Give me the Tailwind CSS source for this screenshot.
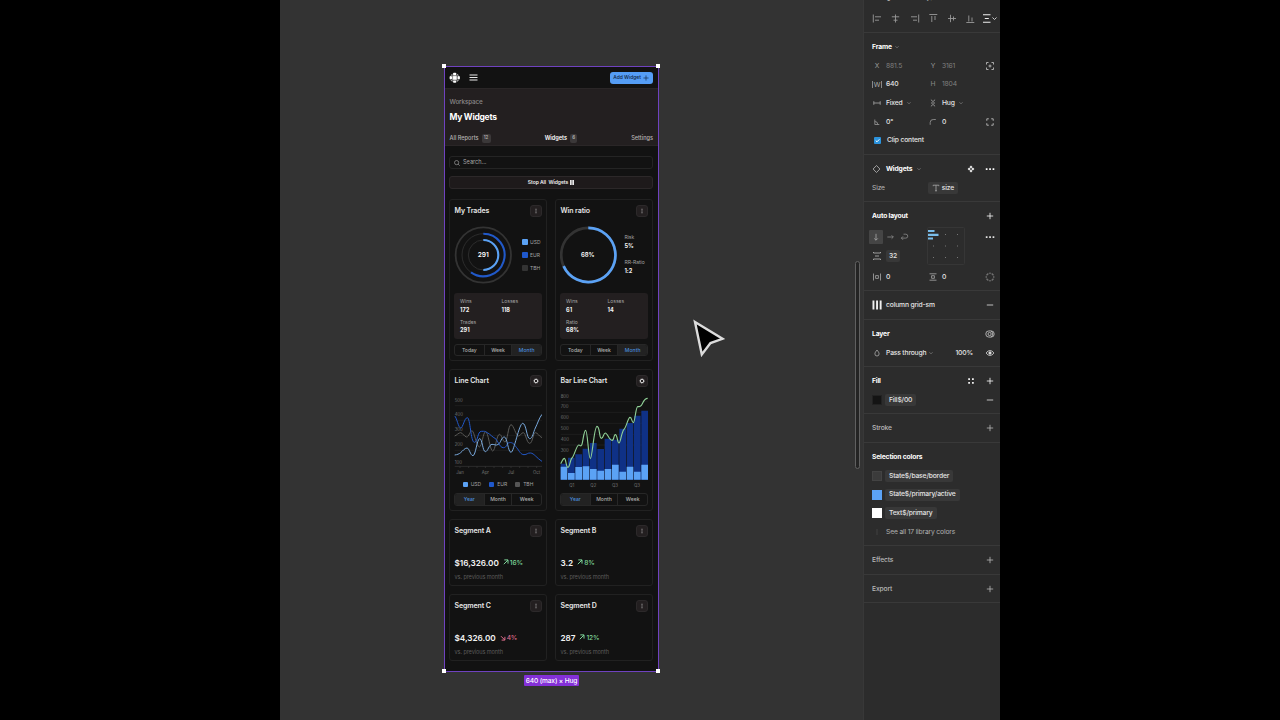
<!DOCTYPE html>
<html lang="en">
  <head>
    <meta charset="UTF-8" />
    <meta name="viewport" content="width=device-width, initial-scale=1.0" />
    <title>Widgets</title>
    <script src="https://cdn.jsdelivr.net/npm/@tailwindcss/browser@4"></script>
  </head>
  <body class="bg-black h-screen overflow-hidden flex justify-center font-['Inter',sans-serif] leading-none">
    <!-- Icons -->
    <svg class="hidden">
      <symbol id="plus" viewBox="0 0 10 10"><path d="M5 1.8v6.4M1.8 5h6.4" stroke="currentColor" stroke-width=".8" fill="none" /></symbol>
      <symbol id="minus" viewBox="0 0 10 10"><path d="M1.8 5h6.4" stroke="currentColor" stroke-width=".8" fill="none" /></symbol>
      <symbol id="chevron" viewBox="0 0 6 6"><path d="M1.5 2.3 3 3.8l1.5-1.5" stroke="currentColor" stroke-width=".7" fill="none" /></symbol>
      <symbol id="dots" viewBox="0 0 10 10"><path d="M.8 4.2h1.7v1.7H.8zM4.2 4.2h1.7v1.7H4.2zM7.6 4.2h1.7v1.7H7.6z" fill="currentColor" /></symbol>
      <symbol id="kebab" viewBox="0 0 12 12"><path d="M5.5 3.3h1v1.1h-1zM5.5 5.4h1v1.1h-1zM5.5 7.5h1v1.1h-1z" fill="currentColor" /></symbol>
      <symbol id="gear" viewBox="0 0 12 12"><circle cx="6" cy="6" r="2.1" stroke="currentColor" stroke-width="1.2" fill="none" /><circle cx="6" cy="6" r="2.9" stroke="currentColor" stroke-width=".5" stroke-dasharray="1.14 1.14" fill="none" /></symbol>
      <symbol id="up" viewBox="0 0 6 6"><path d="M.8 5.2 5 1M1.3.9H5v3.7" stroke="currentColor" stroke-width="1" fill="none" /></symbol>
      <symbol id="down" viewBox="0 0 6 6"><path d="M1 1.2l3.8 3.8M4.9 1.8v3.3H1.6" stroke="currentColor" stroke-width="1" fill="none" /></symbol>
    </svg>

    <div class="relative w-[720px] h-full bg-[#333333] flex justify-end overflow-hidden">
      <!-- Selected frame -->
      <div class="absolute left-[164px] top-[66px] w-[215px] h-[606px] border border-[#6f42c0] bg-[#121212] text-[#e6e6e6] flex flex-col">
        <header class="h-[21px] shrink-0 flex items-center pl-1 pr-[5px]">
          <svg class="w-[12px] h-[12px]" viewBox="0 0 12 12" fill="#fff">
            <rect x="4" y=".8" width="3.4" height="2.4" rx="1" /><rect x="4" y="8.4" width="3.4" height="2.4" rx="1" />
            <rect x=".6" y="4.1" width="2.4" height="3.4" rx="1" /><rect x="8.5" y="4.1" width="2.4" height="3.4" rx="1" />
            <rect x="3.2" y="3.3" width="5.1" height="5.1" />
            <path d="M3.6 1.8v1.9H1.5a4.5 4.5 0 0 1 2.1-1.9zM7.9 1.8v1.9H10a4.5 4.5 0 0 0-2.1-1.9zM3.6 9.9V8H1.5a4.5 4.5 0 0 0 2.1 1.9zM7.9 9.9V8H10a4.5 4.5 0 0 1-2.1 1.9z" fill="#c4c4c4" />
            <path d="M3.6 1.5v8.7M7.9 1.5v8.7M1.4 3.7h8.7M1.4 8h8.7" stroke="#333" stroke-width=".4" />
          </svg>
          <svg class="w-[9px] h-[9px] ml-[8px]" viewBox="0 0 9 9"><path d="M.5 2h8M.5 4.5h8M.5 7h8" stroke="#e8e8e8" stroke-width="1" /></svg>
          <div class="ml-auto w-[43px] h-[12px] rounded-[3px] bg-[#559df5] text-[#10233f] text-[5px] tracking-[-0.05px] font-medium flex items-center justify-center gap-[1px] whitespace-nowrap">
            Add Widget <svg class="w-[8px] h-[8px]"><use href="#plus" /></svg>
          </div>
        </header>

        <section class="h-[58px] shrink-0 bg-[#231f20] border-y border-[#2a2627] pl-[4.5px] pr-[5px]">
          <p class="mt-[8px] h-[10px] flex items-center text-[6.3px] tracking-[-0.1px] text-[#8c898a] font-medium">Workspace</p>
          <h1 class="mt-[3px] h-[14px] flex items-center text-[8.5px] tracking-[-0.27px] font-bold text-white">My Widgets</h1>
          <nav class="mt-[8px] h-[12px] pt-[1px] flex items-center justify-between text-[5.6px] text-[#b5b3b3] font-medium">
            <div class="flex items-center gap-[3px]">All Reports <span class="w-[9px] h-[9px] mb-[1px] rounded-[2px] bg-[#3b3839] flex items-center justify-center text-[4.5px] pt-[1px]">12</span></div>
            <div class="flex items-center gap-[3px] text-white font-semibold">Widgets <span class="w-[7px] h-[9px] mb-[1px] rounded-[2px] bg-[#3b3839] text-[#b5b3b3] flex items-center justify-center text-[4.5px] pt-[1px]">6</span></div>
            <div class="py-[2px]">Settings</div>
          </nav>
        </section>

        <main class="pt-[10px] pl-1 pr-[5px] flex flex-col">
          <div class="h-[13px] border border-[#242424] rounded-[3px] flex items-center pl-[4px] gap-[3px] text-[5.6px] text-[#a5a5a5]">
            <svg class="w-[6px] h-[6px]" viewBox="0 0 6 6" fill="none" stroke="#b0b0b0" stroke-width=".6"><circle cx="2.6" cy="2.6" r="2.1" /><path d="m4.1 4.1 1.6 1.6" /></svg>
            Search...
          </div>
          <div class="mt-[7px] h-[13px] border border-[#2c2829] bg-[#1e1a1b] rounded-[3px] flex items-center justify-center gap-[2px] text-[5px] tracking-[-0.05px] font-semibold whitespace-pre text-[#f0f0f0]">Stop All  Widgets<svg class="w-[4px] h-[5px]" viewBox="0 0 4 5" fill="#e8e8e8"><path d="M0 0h1.7v5H0zM2.3 0H4v5H2.3z" /></svg></div>

          <div id="cards" class="mt-[10px] grid grid-cols-2 gap-x-[8px] gap-y-[8px]">
            <!-- My Trades -->
            <article class="h-[162px] border border-[#212121] rounded-[3px] px-[4px] pt-[5px]">
              <div class="h-[12px] flex items-center justify-between">
                <h2 class="text-[7px] tracking-[-0.1px] font-semibold pb-[1px] pl-[.5px]">My Trades</h2>
                <svg class="w-[12px] h-[12px] rounded-[3px] bg-[#231f20] border border-[#2c292a] text-[#ccc]" viewBox="0 0 12 12"><use href="#kebab" /></svg>
              </div>
              <div class="mt-[8px] h-[60px] flex items-center">
                <svg class="w-[59px] h-[59px]" viewBox="0 0 59 59" fill="none">
                  <circle cx="29.3" cy="29" r="27.7" stroke="#333" stroke-width="1.8" />
                  <circle cx="29.3" cy="29" r="21.3" stroke="#2c2c2c" stroke-width="1" />
                  <circle cx="29.3" cy="29" r="15" stroke="#2c2c2c" stroke-width="1" />
                  <path d="M29.3 7.7a21.3 21.3 0 1 1-12.3 38.7" stroke="#2159c9" stroke-width="2.1" />
                  <path d="M29.3 14a15 15 0 0 1 0 30" stroke="#5ba2f5" stroke-width="2.1" />
                  <text x="29.3" y="31.2" text-anchor="middle" font-size="6.6" font-weight="600" fill="#fff">291</text>
                </svg>
                <ul class="ml-[9px] flex flex-col gap-[7px] text-[5px] text-[#a3a3a3]">
                  <li class="h-[6px] flex items-center gap-[2px]"><i class="size-[6px] rounded-[1px] bg-[#5ba2f5]"></i>USD</li>
                  <li class="h-[6px] flex items-center gap-[2px]"><i class="size-[6px] rounded-[1px] bg-[#1f58cc]"></i>EUR</li>
                  <li class="h-[6px] flex items-center gap-[2px]"><i class="size-[6px] rounded-[1px] bg-[#333]"></i>TBH</li>
                </ul>
              </div>
              <dl class="mt-[8px] h-[46px] rounded-[3px] bg-[#231f20] pl-[6px] pt-[4px] grid grid-cols-2 grid-rows-[20.5px_20.5px] gap-x-[1px] text-[5px] text-[#a3a3a3]">
                <div><dt class="h-[9px] flex items-center">Wins</dt><dd class="h-[9px] flex items-center text-[5.6px] font-bold text-[#f2f2f2]">172</dd></div>
                <div><dt class="h-[9px] flex items-center">Losses</dt><dd class="h-[9px] flex items-center text-[5.6px] font-bold text-[#f2f2f2]">118</dd></div>
                <div><dt class="h-[9px] flex items-center">Trades</dt><dd class="h-[9px] flex items-center text-[5.6px] font-bold text-[#f2f2f2]">291</dd></div>
              </dl>
              <div class="mt-[5px] h-[12px] border border-[#272727] rounded-[3px] grid grid-cols-3 text-center text-[5.1px] leading-[10px] text-[#b0b0b0] font-medium overflow-hidden">
                <span>Today</span><span class="border-x border-[#272727]">Week</span><span class="bg-[#222] text-[#4a8ddb]">Month</span>
              </div>
            </article>

            <!-- Win ratio -->
            <article class="h-[162px] border border-[#212121] rounded-[3px] px-[4px] pt-[5px]">
              <div class="h-[12px] flex items-center justify-between">
                <h2 class="text-[7px] tracking-[-0.1px] font-semibold pb-[1px] pl-[.5px]">Win ratio</h2>
                <svg class="w-[12px] h-[12px] rounded-[3px] bg-[#231f20] border border-[#2c292a] text-[#ccc]" viewBox="0 0 12 12"><use href="#kebab" /></svg>
              </div>
              <div class="mt-[8px] h-[60px] flex items-center">
                <svg class="w-[59px] h-[59px]" viewBox="0 0 59 59" fill="none">
                  <circle cx="28.3" cy="29" r="27.1" stroke="#333" stroke-width="2.7" />
                  <path d="M28.3 1.9a27.1 27.1 0 1 1-24.7 38.2" stroke="#5ba2f5" stroke-width="2.7" />
                  <text x="27.8" y="31.2" text-anchor="middle" font-size="6" font-weight="600" fill="#fff">68%</text>
                </svg>
                <dl class="ml-[5.5px] pb-[1px] text-[5px] tracking-[-0.05px] text-[#a3a3a3] whitespace-nowrap">
                  <dt class="h-[9px] flex items-center">Risk</dt>
                  <dd class="h-[9px] flex items-center text-[5.6px] font-bold text-[#f2f2f2]">5%</dd>
                  <dt class="mt-[7px] h-[9px] flex items-center">RR-Ratio</dt>
                  <dd class="h-[9px] flex items-center text-[5.6px] font-bold text-[#f2f2f2]">1:2</dd>
                </dl>
              </div>
              <dl class="mt-[8px] h-[46px] rounded-[3px] bg-[#231f20] pl-[6px] pt-[4px] grid grid-cols-2 grid-rows-[20.5px_20.5px] gap-x-[1px] text-[5px] text-[#a3a3a3]">
                <div><dt class="h-[9px] flex items-center">Wins</dt><dd class="h-[9px] flex items-center text-[5.6px] font-bold text-[#f2f2f2]">61</dd></div>
                <div><dt class="h-[9px] flex items-center">Losses</dt><dd class="h-[9px] flex items-center text-[5.6px] font-bold text-[#f2f2f2]">14</dd></div>
                <div><dt class="h-[9px] flex items-center">Ratio</dt><dd class="h-[9px] flex items-center text-[5.6px] font-bold text-[#f2f2f2]">68%</dd></div>
              </dl>
              <div class="mt-[5px] h-[12px] border border-[#272727] rounded-[3px] grid grid-cols-3 text-center text-[5.1px] leading-[10px] text-[#b0b0b0] font-medium overflow-hidden">
                <span>Today</span><span class="border-x border-[#272727]">Week</span><span class="bg-[#222] text-[#4a8ddb]">Month</span>
              </div>
            </article>

            <!-- Line chart -->
            <article class="h-[142px] border border-[#212121] rounded-[3px] px-[4px] pt-[5px]">
              <div class="h-[12px] flex items-center justify-between">
                <h2 class="text-[7px] tracking-[-0.05px] font-semibold pb-[1px] pl-[.5px]">Line Chart</h2>
                <svg class="w-[12px] h-[12px] rounded-[3px] bg-[#231f20] border border-[#2c292a] text-[#ddd]" viewBox="0 0 12 12"><use href="#gear" /></svg>
              </div>
              <svg class="mt-[9px] w-[88px] h-[80px]" viewBox="42 90 264 240" fill="none">
                <path d="M44 119h262M44 163h262M44 208h262M44 253h262" stroke="#1e1e1e" stroke-width="3" />
                <path d="M44 301h262M60 301v5M86 301v5M111 301v5M136 301v5M162 301v5M188 301v5M213 301v5M239 301v5M264 301v5M290 301v5" stroke="#393939" stroke-width="2" />
                <g font-size="13" fill="#747474">
                  <text x="44" y="107">500</text><text x="44" y="151">400</text><text x="44" y="195">300</text><text x="44" y="240">200</text><text x="44" y="293">100</text>
                  <g text-anchor="middle"><text x="60" y="323">Jan</text><text x="136" y="323">Apr</text><text x="213" y="323">Jul</text><text x="290" y="323">Oct</text></g>
                </g>
                <g stroke-width="3">
                  <path d="M44 210C50 208 56 200 62 200S73 213 80 213 90 194 96 194 110 243 118 243 129 197 137 197 150 255 158 255 170 205 178 205 188 228 195 228 205 176 213 176 228 212 236 210 243 200 250 200 260 232 269 232 279 200 286 200 298 212 306 215" stroke="#5a5a58" />
                  <path d="M44 150C50 153 55 186 62 186S73 155 82 155 92 229 103 229 112 196 124 196 133 195 142 200 157 213 165 217 178 245 190 245 198 232 208 230 222 235 230 245 242 266 252 266 262 260 272 261 290 276 306 286" stroke="#2258c8" />
                  <path d="M44 267C52 266 57 264 62 260S74 246 81 246 91 269 99 269 111 218 119 218 128 257 136 257 147 235 156 235 167 240 175 235 184 213 193 213 204 259 213 259 237 172 248 172 260 218 269 218 280 198 286 186 298 155 306 145" stroke="#79a9dd" />
                </g>
              </svg>
              <ul class="mt-[5px] h-[7px] flex items-center justify-center gap-[8px] text-[5px] text-[#a3a3a3]">
                <li class="flex items-center gap-[3px]"><i class="size-[5px] rounded-[1px] bg-[#5ba2f5]"></i>USD</li>
                <li class="flex items-center gap-[3px]"><i class="size-[5px] rounded-[1px] bg-[#1f58cc]"></i>EUR</li>
                <li class="flex items-center gap-[3px]"><i class="size-[5px] rounded-[1px] bg-[#555]"></i>TBH</li>
              </ul>
              <div class="mt-[5px] h-[13px] border border-[#272727] rounded-[3px] grid grid-cols-3 text-center text-[5.1px] leading-[11px] text-[#b0b0b0] font-medium overflow-hidden">
                <span class="bg-[#222] text-[#4a8ddb]">Year</span><span class="border-x border-[#272727]">Month</span><span>Week</span>
              </div>
            </article>

            <!-- Bar line chart -->
            <article class="h-[142px] border border-[#212121] rounded-[3px] px-[4px] pt-[5px]">
              <div class="h-[12px] flex items-center justify-between">
                <h2 class="text-[7px] tracking-[-0.1px] font-semibold whitespace-nowrap pb-[1px] pl-[.5px]">Bar Line Chart</h2>
                <svg class="w-[12px] h-[12px] rounded-[3px] bg-[#231f20] border border-[#2c292a] text-[#ddd]" viewBox="0 0 12 12"><use href="#gear" /></svg>
              </div>
              <svg class="mt-[6px] w-[88px] h-[97px]" viewBox="30 81 264 291" fill="none">
                <path d="M32 107h261M32 139h261M32 172h261M32 205h261M32 237h261" stroke="#1e1e1e" stroke-width="3" />
                <g font-size="13" fill="#747474">
                  <text x="32" y="95">800</text><text x="32" y="127">700</text><text x="32" y="160">600</text><text x="32" y="193">500</text><text x="32" y="225">400</text><text x="32" y="259">300</text>
                  <g text-anchor="middle"><text x="65" y="362">Q1</text><text x="130" y="362">Q2</text><text x="195" y="362">Q3</text><text x="261" y="362">Q3</text></g>
                </g>
                <path d="M32 293h20v48H32zM54 275h20v66H54zM76 265h20v76H76zM98 248h20v93H98zM120 231h20v110H120zM142 249h20v92H142zM164 218h20v123H164zM186 221h20v120H186zM208 188h20v153H208zM230 171h20v170H230zM252 149h20v192H252zM274 134h20v207H274z" fill="#0f3186" />
                <path d="M32 302h20v39H32zM54 321h20v20H54zM76 303h20v38H76zM98 301h20v40H98zM120 309h20v32H120zM142 314h20v27H142zM164 309h20v32H164zM186 296h20v45H186zM208 317h20v24H208zM230 302h20v39H230zM252 317h20v24H252zM274 296h20v45H274z" fill="#5ba2f5" />
                <path d="M32 293C36 288 38 277 43 277S48 304 54 304 60 280 66 276 80 237 86 237 91 243 95 237 101 193 107 193 115 278 121 278 132 181 141 181 147 217 154 217 160 201 166 201 178 223 186 223 190 206 196 206 202 231 207 231 214 198 222 190 234 154 240 154 245 170 250 170 257 123 263 122 269 124 274 118 281 97 293 97" stroke="#8fcf96" stroke-width="3.4" />
              </svg>
              <div class="mt-[3px] h-[13px] border border-[#272727] rounded-[3px] grid grid-cols-3 text-center text-[5.1px] leading-[11px] text-[#b0b0b0] font-medium overflow-hidden">
                <span class="bg-[#222] text-[#4a8ddb]">Year</span><span class="border-x border-[#272727]">Month</span><span>Week</span>
              </div>
            </article>
          </div>
        </main>

        <!-- Resize handles -->
        <i class="absolute -left-[3px] -top-[3px] size-[4px] bg-white"></i>
        <i class="absolute -right-[2px] -top-[3px] size-[4px] bg-white"></i>
        <i class="absolute -left-[3px] -bottom-[2px] size-[4px] bg-white"></i>
        <i class="absolute -right-[2px] -bottom-[2px] size-[4px] bg-white"></i>
      </div>
      <div class="absolute left-[244px] top-[675px] w-[55px] h-[11px] rounded-[1px] bg-[#8430d8] text-white text-[6.6px] tracking-[-0.15px] font-medium flex items-center justify-center pt-[1px] whitespace-nowrap">640 (max) × Hug</div>

      <!-- Cursor -->
      <svg class="absolute left-[412px] top-[318px] w-[34px] h-[40px]" viewBox="0 0 34 40"><path d="M3 4 30.5 20.8 18.5 25 9.8 36.5z" fill="#000" stroke="#dcdcdc" stroke-width="2.4" /></svg>

      <!-- Scrollbar -->
      <div class="absolute left-[575px] top-[261px] w-[5px] h-[208px] rounded-full border border-[#606060] bg-[#242424]"></div>

      <!-- Properties panel -->
      <aside class="w-[137px] h-full bg-[#2c2c2c] border-l border-[#383838] text-[6.75px] tracking-[-0.17px] text-[#e4e4e4] font-medium whitespace-nowrap">
        <section class="h-[33px] border-b border-[#393939] px-2 relative overflow-hidden">
          <div class="absolute left-[9px] -top-[6px] text-white">Design</div>
          <div class="absolute left-[44px] -top-[6px] text-[#bbb]">Prototype</div>
          <svg class="absolute left-[8px] top-[13px] w-[126px] h-[11px]" viewBox="0 0 126 11" fill="none" stroke="#9a9a9a" stroke-width=".9">
            <path d="M1.3 1.5v8M3 3.8h6M3 7.2h4" />
            <path d="M23.5 1.5v8M19.8 3.8h7.4M21.5 7.2h4" />
            <path d="M46.7 1.5v8M39 3.8h6M41 7.2h4" />
            <path d="M57.3 1.5h8M59.8 3v6M63 3v4" />
            <path d="M76 5.5h8M78.5 1.8v7.4M81.5 3.5v4" />
            <path d="M94.3 9.5h8M96.8 2.5v6M100 4.5v4" />
            <path d="M111 1.8h7.5M112.8 5.5h4M111 9.2h7.5" stroke="#eee" stroke-width="1.1" />
            <path d="m120.5 4.5 2 2 2-2" stroke="#ddd" />
          </svg>
        </section>

        <section class="h-[122px] border-b border-[#393939] pt-[5px] pl-2 pr-[5px]">
          <div class="h-[18.7px] flex items-center gap-[2px] font-bold text-white">Frame <svg class="size-[6px] text-[#888]"><use href="#chevron" /></svg></div>
          <div class="h-[18.7px] flex items-center text-[#808080] font-normal">
            <div class="w-[56px] flex items-center gap-1"><span class="w-[10px] text-center text-[#999]">X</span>881.5</div>
            <div class="flex items-center gap-1"><span class="w-[10px] text-center text-[#999]">Y</span>3161</div>
            <svg class="ml-auto size-[10px]" viewBox="0 0 10 10" stroke="#ccc" stroke-width=".8" fill="none"><path d="M1.5 3.5v-2h2M6.5 1.5h2v2M8.5 6.5v2h-2M3.5 8.5h-2v-2M5 3.5v3M3.5 5h3" /></svg>
          </div>
          <div class="h-[18.7px] flex items-center">
            <div class="w-[56px] flex items-center gap-1"><span class="w-[10px] flex justify-center font-normal text-[#aaa] border-x border-[#888] leading-[7px]">W</span>640</div>
            <div class="flex items-center gap-1 font-normal text-[#808080]"><span class="w-[10px] text-center text-[#888]">H</span>1804</div>
          </div>
          <div class="h-[18.7px] flex items-center">
            <div class="w-[56px] flex items-center gap-1"><svg class="size-[10px]" viewBox="0 0 10 10" stroke="#aaa" stroke-width=".8"><path d="M1.8 3.2v3.6M8.2 3.2v3.6M1.8 5h6.4" /></svg>Fixed<svg class="size-[6px] -ml-[1px] text-[#888]"><use href="#chevron" /></svg></div>
            <div class="flex items-center gap-1"><svg class="size-[10px]" viewBox="0 0 10 10" stroke="#aaa" stroke-width=".8" fill="none"><path d="M2.9 1.7 5 3.6l2.1-1.9M2.9 8.3 5 6.4l2.1 1.9M3 5h4" /></svg>Hug<svg class="size-[6px] -ml-[1px] text-[#888]"><use href="#chevron" /></svg></div>
          </div>
          <div class="h-[18.7px] flex items-center">
            <div class="w-[56px] flex items-center gap-1"><svg class="size-[10px]" viewBox="0 0 10 10" stroke="#999" stroke-width=".8" fill="none"><path d="M2.8 2.5v5h4.5M2.8 4.5a3 3 0 0 1 3 3" /></svg>0°</div>
            <div class="flex items-center gap-1"><svg class="size-[10px]" viewBox="0 0 10 10" stroke="#999" stroke-width=".8" fill="none"><path d="M2.2 7.8V5.5a3 3 0 0 1 3-3h2.6" /></svg>0</div>
            <svg class="ml-auto size-[10px]" viewBox="0 0 10 10" stroke="#ccc" stroke-width=".8" fill="none"><path d="M1.8 3.8v-2h2M6.2 1.8h2v2M8.2 6.2v2h-2M3.8 8.2h-2v-2" /></svg>
          </div>
          <div class="h-[18.7px] flex items-center gap-[5px]"><span class="w-[10px] flex justify-center"><svg class="size-[7px]" viewBox="0 0 7 7"><rect width="7" height="7" rx="1" fill="#2b93dd" /><path d="m1.7 3.5 1.3 1.3 2.4-2.5" stroke="#fff" stroke-width="1" fill="none" /></svg></span>Clip content</div>
        </section>

        <section class="h-[47px] border-b border-[#393939] pt-[5px] pl-2 pr-[5px]">
          <div class="h-[18.7px] flex items-center font-bold text-white">
            <svg class="size-[10px] mr-1" viewBox="0 0 10 10" stroke="#bbb" stroke-width=".8" fill="none"><path d="M4.5 1.5 7.9 5 4.5 8.5 1.1 5z" /></svg>Widgets<svg class="size-[6px] ml-[4px] text-[#888]"><use href="#chevron" /></svg>
            <svg class="ml-auto size-[10px] mr-[9px]" viewBox="0 0 10 10" fill="#eee"><path d="m5 1.6 1.5 1.5L5 4.6 3.5 3.1zM5 5.4l1.5 1.5L5 8.4 3.5 6.9zM3.1 3.5 4.6 5 3.1 6.5 1.6 5zM6.9 3.5 8.4 5 6.9 6.5 5.4 5z" /></svg>
            <svg class="size-[10px]"><use href="#dots" /></svg>
          </div>
          <div class="h-[18.7px] flex items-center">
            <span class="w-[56px] font-normal text-[#b5b5b5]">Size</span>
            <span class="w-[30px] h-[12px] rounded-[2px] bg-[#383838] flex items-center justify-center gap-[2px]"><svg class="size-[8px]" viewBox="0 0 8 8" stroke="#aaa" stroke-width=".8" fill="none"><path d="M1.2 2.2v-1h5.6v1M4 1.2v5.6M3 6.8h2" /></svg>size</span>
          </div>
        </section>

        <section class="h-[89px] border-b border-[#393939] pt-[5px] pl-2 pr-[5px]">
          <div class="h-[18.2px] flex items-center justify-between font-bold text-white"><span class="pt-[.5px]">Auto layout</span> <svg class="size-[10px]"><use href="#plus" /></svg></div>
          <div class="flex h-[42px]">
            <div class="w-[55px]">
              <div class="mt-[5px] ml-[-3px] h-[14px] flex items-center">
                <svg class="w-[14px] h-[14px] bg-[#454545] rounded-[1px]" viewBox="0 0 14 14" stroke="#aaa" stroke-width=".8" fill="none"><path d="M7 3.8v6.4M5.2 8.4 7 10.2l1.8-1.8" /></svg>
                <svg class="w-[14px] h-[14px]" viewBox="0 0 14 14" stroke="#8c8c8c" stroke-width=".8" fill="none"><path d="M4.3 7h6M8.6 5.3 10.3 7 8.6 8.7" /></svg>
                <svg class="w-[14px] h-[14px]" viewBox="0 0 14 14" stroke="#8c8c8c" stroke-width=".8" fill="none"><path d="M6.5 4.2h2.3a1.9 1.9 0 0 1 0 3.9H4.3M6 6.4 4.3 8.1 6 9.8" /></svg>
              </div>
              <div class="mt-[5px] h-[14px] flex items-center gap-[4px]">
                <svg class="size-[10px]" viewBox="0 0 10 10" stroke="#bbb" stroke-width=".8" fill="none"><path d="M1.5 1v1h7V1M1.5 9V8h7v1M3 5h4" /></svg>
                <span class="w-[14px] h-[12px] rounded-[2px] bg-[#383838] flex items-center justify-center">32</span>
              </div>
            </div>
            <svg class="mt-[2px] w-[38px] h-[38px]" viewBox="0 0 38 38" fill="#777">
              <rect x=".5" y=".5" width="37" height="37" rx="1" fill="none" stroke="#363636" />
              <path d="M18 7h1v1h-1zM30 7h1v1h-1zM6 18.5h1v1H6zM18 18.5h1v1h-1zM30 18.5h1v1h-1zM6 30h1v1H6zM18 30h1v1h-1zM30 30h1v1h-1z" />
              <path d="M1 3h6.5v2.1H1zM1 6.7h10.5V9H1zM1 10.6h5v2H1z" fill="#79bdea" />
            </svg>
            <svg class="ml-auto mt-[7px] size-[10px]"><use href="#dots" /></svg>
          </div>
          <div class="h-[20px] flex items-center">
            <div class="w-[56px] flex items-center gap-1"><svg class="size-[10px]" viewBox="0 0 10 10" stroke="#aaa" stroke-width=".8" fill="none"><path d="M1.5 1.5v7M8.5 1.5v7M3.6 3.6h2.8v2.8H3.6z" /></svg>0</div>
            <div class="flex items-center gap-1"><svg class="size-[10px]" viewBox="0 0 10 10" stroke="#aaa" stroke-width=".8" fill="none"><path d="M1.5 1.8h7M1.5 8.2h7M3.6 3.7h2.8v2.6H3.6z" /></svg>0</div>
            <svg class="ml-auto size-[10px]" viewBox="0 0 10 10" stroke="#999" stroke-width=".8" fill="none"><path d="M2 3.5V2h1.5M6.5 2H8v1.5M8 6.5V8H6.5M3.5 8H2V6.5M1.2 4.2v1.6M8.8 4.2v1.6M4.2 1.2h1.6M4.2 8.8h1.6" /></svg>
          </div>
        </section>

        <section class="h-[29px] border-b border-[#393939] pl-2 pr-[5px] flex items-center">
          <svg class="size-[10px] mr-1" viewBox="0 0 10 10" fill="#eee"><path d="M.5.5h1.9v9H.5zM4.1.5H6v9H4.1zM7.7.5h1.9v9H7.7z" /></svg><span class="pt-[1px]">column grid-sm</span><svg class="ml-auto size-[10px]"><use href="#minus" /></svg>
        </section>

        <section class="h-[47px] border-b border-[#393939] pt-[5px] pl-2 pr-[5px]">
          <div class="h-[18.7px] flex items-center justify-between font-bold text-white">Layer
            <svg class="size-[10px]" viewBox="0 0 10 10" stroke="#ccc" stroke-width=".8" fill="none"><path d="M3.9 1.9h2.2a3.1 3.1 0 0 1 0 6.2H3.9a3.1 3.1 0 0 1 0-6.2z" /><circle cx="4.6" cy="5" r="1.6" /><path d="M6 2.2a3.1 3.1 0 0 1 0 5.6" /></svg>
          </div>
          <div class="h-[18.7px] flex items-center">
            <svg class="size-[10px] mr-1" viewBox="0 0 10 10" stroke="#aaa" stroke-width=".8" fill="none"><path d="M5 2C4 3.4 2.9 4.5 2.9 5.9a2.1 2.1 0 0 0 4.2 0C7.1 4.5 6 3.4 5 2z" /></svg>Pass through<svg class="size-[6px] ml-[2px] text-[#888]"><use href="#chevron" /></svg>
            <span class="ml-auto mr-[12px]">100%</span>
            <svg class="size-[10px]" viewBox="0 0 10 10" stroke="#ddd" stroke-width=".8" fill="none"><path d="M1.2 5C3 1.8 7 1.8 8.8 5 7 8.2 3 8.2 1.2 5z" /><circle cx="5" cy="5" r="1.2" fill="#ddd" /></svg>
          </div>
        </section>

        <section class="h-[47px] border-b border-[#393939] pt-[5px] pl-2 pr-[5px]">
          <div class="h-[18.7px] flex items-center font-bold text-white">Fill
            <svg class="ml-auto mr-[9px] size-[10px]" viewBox="0 0 10 10" fill="#eee"><path d="M2.2 2.2H4V4H2.2zM6 2.2h1.8V4H6zM2.2 6H4v1.8H2.2zM6 6h1.8v1.8H6z" /></svg><svg class="size-[10px]"><use href="#plus" /></svg>
          </div>
          <div class="h-[18.7px] flex items-center"><i class="size-[10px] bg-[#141414] border border-[#222]"></i><span class="ml-[3px] h-[12px] px-[4px] rounded-[2px] bg-[#383838] flex items-center">Fill$/00</span><svg class="ml-auto size-[10px]"><use href="#minus" /></svg></div>
        </section>

        <section class="h-[29px] border-b border-[#393939] pl-2 pr-[5px] flex items-center justify-between text-[#b8b8b8]"><span class="pt-[1px]">Stroke</span> <svg class="size-[10px]"><use href="#plus" /></svg></section>

        <section class="h-[103px] border-b border-[#393939] pt-[5px] pl-2 pr-[5px]">
          <div class="h-[18.7px] flex items-center font-bold text-white">Selection colors</div>
          <div class="h-[18.7px] flex items-center"><i class="size-[10px] bg-[#3b3b3b] border border-[#434343]"></i><span class="ml-[3px] h-[12px] px-[4px] rounded-[2px] bg-[#383838] flex items-center">State$/base/border</span></div>
          <div class="h-[18.7px] flex items-center"><i class="size-[10px] bg-[#5ba2f5]"></i><span class="ml-[3px] h-[12px] px-[4px] rounded-[2px] bg-[#383838] flex items-center">State$/primary/active</span></div>
          <div class="h-[18.7px] flex items-center"><i class="size-[10px] bg-white"></i><span class="ml-[3px] h-[12px] px-[4px] rounded-[2px] bg-[#383838] flex items-center">Text$/primary</span></div>
          <div class="h-[18.7px] flex items-center text-[#b0b0b0] font-normal"><svg class="w-[10px] h-[10px] mr-[4px]" viewBox="0 0 10 10" fill="#555"><path d="M4.5 2.5h1v1h-1zM4.5 4.5h1v1h-1zM4.5 6.5h1v1h-1z" /></svg>See all 17 library colors</div>
        </section>

        <section class="h-[29px] border-b border-[#393939] pl-2 pr-[5px] flex items-center justify-between text-[#b8b8b8]"><span class="pt-[1px]">Effects</span> <svg class="size-[10px]"><use href="#plus" /></svg></section>
        <section class="h-[28px] border-b border-[#393939] pl-2 pr-[5px] flex items-center justify-between text-[#b8b8b8]"><span class="pt-[1px]">Export</span> <svg class="size-[10px]"><use href="#plus" /></svg></section>
      </aside>
    </div>

    <script>
      // Segment cards
      const segments = [
        { name: "Segment A", value: "$16,326.00", change: "16%", trend: "up" },
        { name: "Segment B", value: "3.2", change: "8%", trend: "up" },
        { name: "Segment C", value: "$4,326.00", change: "4%", trend: "down" },
        { name: "Segment D", value: "287", change: "12%", trend: "up" },
      ];

      const cards = document.getElementById("cards");

      segments.forEach((s) => {
        const color = s.trend === "up" ? "text-[#7fd69a]" : "text-[#dd6d8b]";
        const lift = s.trend === "up" ? "mb-[2px]" : "mb-0";

        cards.insertAdjacentHTML(
          "beforeend",
          `<article class="h-[67px] border border-[#212121] rounded-[3px] px-[4px] pt-[5px]">
            <div class="h-[12px] flex items-center justify-between">
              <h2 class="text-[7px] tracking-[-0.1px] font-semibold pb-[1px] pl-[.5px]">${s.name}</h2>
              <svg class="w-[12px] h-[12px] rounded-[3px] bg-[#231f20] border border-[#2c292a] text-[#ccc]" viewBox="0 0 12 12"><use href="#kebab" /></svg>
            </div>
            <div class="mt-[20px] pl-[.5px] h-[12px] flex items-center ${color}">
              <b class="text-[8.2px] tracking-[-0.03px] font-semibold text-[#f2f2f2] mr-[4px]">${s.value}</b>
              <svg class="size-[6px] mr-[1px] ${lift}"><use href="#${s.trend}" /></svg>
              <span class="text-[6.6px] tracking-[-0.1px] font-medium">${s.change}</span>
            </div>
            <p class="mt-[4.5px] pl-[.5px] h-[8px] flex items-center text-[5.6px] tracking-[-0.1px] text-[#5c5c5c]">vs. previous month</p>
          </article>`
        );
      });
    </script>
  </body>
</html>
